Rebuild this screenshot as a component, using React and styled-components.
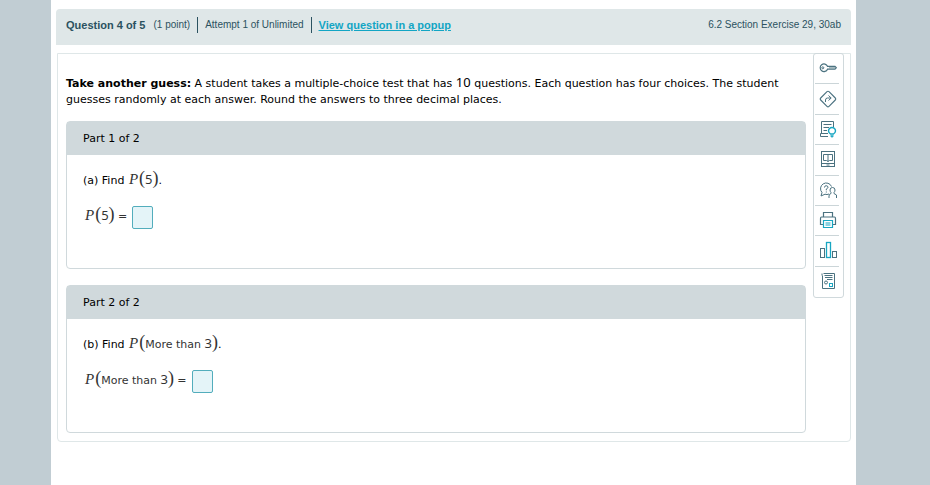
import React from 'react';
import styled, { createGlobalStyle } from 'styled-components';

const GlobalStyle = createGlobalStyle`
  *, *::before, *::after {
    box-sizing: border-box;
  }

  body {
    margin: 0;
    background: #c1cdd3;
    color: #000;
    font-family: Verdana, "DejaVu Sans", sans-serif;
    font-size: 11px;
    line-height: 16px;
  }
`;

const Page = styled.main`
  min-height: 100vh;
  margin: 0 74px 0 51px;
  padding: 9px 5px;
  background: #fff;
`;

const Header = styled.header`
  display: flex;
  align-items: flex-start;
  justify-content: space-between;
  height: 36px;
  padding: 8px 10px;
  border-radius: 4px 4px 0 0;
  background: #dfe7e8;
  color: #2b5260;
  font-family: Arial, "Liberation Sans", sans-serif;
  font-size: 10px;
`;

const HeaderInfo = styled.div`
  display: flex;
  align-items: center;
`;

const QuestionNumber = styled.h1`
  margin: 0 8px 0 0;
  font-size: 11px;
  line-height: 16px;
`;

const HeaderItem = styled.span`
  padding-right: 7px;
  margin-right: 7px;
  border-right: 1px solid #2b5260;
`;

const PopupLink = styled.a`
  color: #12a5c4;
  font-size: 11px;
  font-weight: bold;
`;

const Card = styled.section`
  display: flex;
  align-items: flex-start;
  margin: 8px 0 0 1px;
  border: 1px solid #dfe7e8;
  border-radius: 0 0 4px 4px;
`;

const Content = styled.div`
  flex: 1;
  min-width: 0;
  padding: 22px 7px 8px 8px;
`;

const Intro = styled.p`
  margin: 0 0 13px;
`;

const Part = styled.section`
  min-height: 148px;
  border: 1px solid #d0d9dc;
  border-radius: 4px;

  & + & {
    margin-top: 16px;
  }
`;

const PartTitle = styled.h2`
  margin: 0;
  padding: 9px 16px 8px;
  background: #d0d9dc;
  font-size: 11px;
  font-weight: normal;
  line-height: 16px;
`;

const PartBody = styled.div`
  padding: 14px 16px;
`;

const Prompt = styled.p`
  margin: 0 0 12px;
  line-height: 24px;
`;

const Answer = styled.label`
  display: flex;
  align-items: center;
  gap: 5px;
  padding-left: 1px;
  line-height: 24px;
`;

const MathText = styled.span`
  color: #333;
  white-space: nowrap;
`;

const Variable = styled.i`
  padding: 0 1px;
  font-family: "Liberation Serif", serif;
  font-size: 15px;
  line-height: 1;
`;

const Paren = styled.span`
  font-family: "Liberation Serif", serif;
  font-size: 18px;
  line-height: 1;
`;

const Digit = styled.span`
  font-family: "Noto Sans", sans-serif;
  font-size: 13px;
  line-height: 1;
`;

const AnswerInput = styled.input`
  width: 21px;
  height: 23px;
  padding: 0 2px;
  border: 1px solid #52adbc;
  border-radius: 2px;
  background: #e4f4f8;
  font-size: 11px;
`;

const Toolbar = styled.nav`
  display: grid;
  grid-auto-rows: 1fr;
  flex: none;
  width: 31px;
  min-height: 245px;
  margin: -1px 6px 0 0;
  padding: 0 4px 0 1px;
  border: 1px solid #d0d9dc;
  border-radius: 3px;
`;

const ToolButton = styled.button`
  display: flex;
  align-items: center;
  justify-content: center;
  padding: 0 0 1px 2px;
  border: 0;
  border-bottom: 1px solid #cbd5d8;
  background: none;
  color: #4b7280;
  cursor: pointer;

  &:last-child {
    border-bottom: 0;
  }

  svg {
    flex: none;
    width: 20px;
    height: 20px;
    fill: none;
    stroke: currentColor;
  }

  .accent {
    stroke: #18a6c2;
  }
`;

const tools = [
  {
    label: 'Answer key',
    icon: (
      <>
        <path d="M9.5 8.3A3.8 3.8 0 1 0 9.5 11.2H17L18.3 9.8L17 8.3Z" strokeWidth="1.2" />
        <circle cx="4.8" cy="9.8" r="1" />
        <path d="M11 9.8H17" strokeWidth="0.7" />
      </>
    ),
  },
  {
    label: 'Go to exercise',
    icon: (
      <>
        <path d="M9 2.7Q10 1.7 11 2.7L17.3 9Q18.3 10 17.3 11L11 17.3Q10 18.3 9 17.3L2.7 11Q1.7 10 2.7 9Z" strokeWidth="1.1" />
        <path d="M7.5 13V11Q7.5 9 9.5 9H13M10.5 6.5L13.2 9L10.5 11.5" />
      </>
    ),
  },
  {
    label: 'Hint',
    icon: (
      <>
        <path d="M15.5 8V2.5H3.5V14.5M2.5 14.5V17.5H10M2.5 14.5H10M5.5 5.5H13.5M5.5 8.5H11M5.5 11.5H9" />
        <path className="accent" d="M12.5 15Q10.5 13.5 10.5 12A3.5 3.5 0 1 1 17.5 12Q17.5 13.5 15.5 15ZM12.5 17H15.5M14 17V18.5" strokeWidth="1.4" />
      </>
    ),
  },
  {
    label: 'Textbook',
    icon: (
      <>
        <rect x="3.5" y="2.5" width="13" height="15" />
        <path d="M3.5 14.5H16.5M10 5.5V12.5M10 5.5H5.5V11.5H8.5L10 12.5L11.5 11.5H14.5V5.5H10M8.5 16H11.5" />
      </>
    ),
  },
  {
    label: 'Ask for help',
    icon: (
      <>
        <path d="M11 14Q9 15 7 14.2L3 16L4 12.5A5.7 5.7 0 1 1 13.5 6.5" />
        <path d="M6.5 7.5Q6.5 5.7 8.2 5.7T10 7.3Q10 8.3 8.3 9V10.3M8.3 11.5V12.5" />
        <path d="M11 18V16Q11 14 13 13.5V12.5Q12 11.5 12 10A2.5 2.5 0 0 1 17 10Q17 11.5 16 12.5V13.5L18.5 15V18" />
      </>
    ),
  },
  {
    label: 'Print',
    icon: (
      <>
        <path d="M5.5 7V2.5H14.5V7M5 14.5H2.5V8.5Q2.5 7 3.5 7H16.5Q17.5 7 17.5 8.5V14.5H15" strokeWidth="1.2" />
        <path className="accent" d="M5.5 10.5H14.5V17.5H5.5ZM7.5 13H12.5M7.5 15H12.5" strokeWidth="1.2" />
      </>
    ),
  },
  {
    label: 'Data tools',
    icon: (
      <>
        <rect x="2.5" y="8.5" width="4" height="9" />
        <rect className="accent" x="8.5" y="2.5" width="4" height="15" strokeWidth="1.3" />
        <rect x="14.5" y="11.5" width="4" height="6" />
      </>
    ),
  },
  {
    label: 'Formulas',
    icon: (
      <>
        <path d="M5.5 2.5H16.5V17.5H4.5V4.5M4 2.5V4.5M6.5 4.5H14.5M7 6.5H14.5M9 8.5H14.5" />
        <circle cx="8" cy="11.5" r="1.5" />
        <rect className="accent" x="11.5" y="12.5" width="3" height="3" />
      </>
    ),
  },
];

const Tool = ({ label, children }) => (
  <ToolButton type="button" aria-label={label}>
    <svg viewBox="0 0 20 20">{children}</svg>
  </ToolButton>
);

const Probability = ({ children }) => (
  <MathText>
    <Variable>P</Variable>
    <Paren>(</Paren>
    {children}
    <Paren>)</Paren>
  </MathText>
);

const QuestionPart = ({ title, letter, outcome }) => (
  <Part>
    <PartTitle>{title}</PartTitle>
    <PartBody>
      <Prompt>({letter}) Find <Probability>{outcome}</Probability>.</Prompt>
      <Answer>
        <MathText><Probability>{outcome}</Probability> =</MathText>
        <AnswerInput type="text" />
      </Answer>
    </PartBody>
  </Part>
);

const App = () => (
  <>
    <GlobalStyle />
    <Page>
      <Header>
        <HeaderInfo>
          <QuestionNumber>Question 4 of 5</QuestionNumber>
          <HeaderItem>(1 point)</HeaderItem>
          <HeaderItem>Attempt 1 of Unlimited</HeaderItem>
          <PopupLink href="#popup">View question in a popup</PopupLink>
        </HeaderInfo>
        <span>6.2 Section Exercise 29, 30ab</span>
      </Header>

      <Card>
        <Content>
          <Intro>
            <b>Take another guess:</b> A student takes a multiple-choice test that has <Digit>10</Digit> questions.
            Each question has four choices. The student guesses randomly at each answer. Round the answers to
            three decimal places.
          </Intro>
          <QuestionPart title="Part 1 of 2" letter="a" outcome={<Digit>5</Digit>} />
          <QuestionPart title="Part 2 of 2" letter="b" outcome={<>More than <Digit>3</Digit></>} />
        </Content>
        <Toolbar aria-label="Question tools">
          {tools.map(({ label, icon }) => (
            <Tool key={label} label={label}>{icon}</Tool>
          ))}
        </Toolbar>
      </Card>
    </Page>
  </>
);

export default App;
